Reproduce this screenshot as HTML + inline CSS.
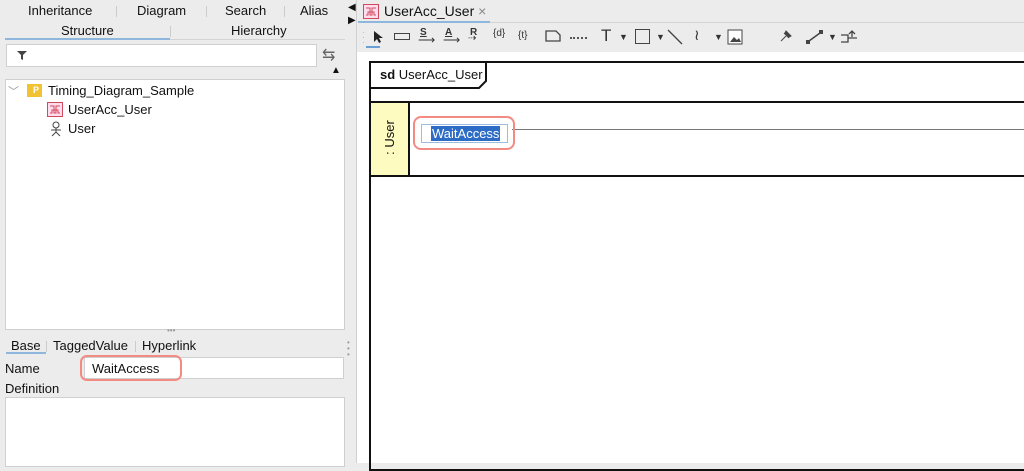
<!DOCTYPE html>
<html><head><style>
*{margin:0;padding:0;box-sizing:border-box}
body{width:1024px;height:463px;overflow:hidden;background:#ececec;font-family:"Liberation Sans",sans-serif;font-size:13px;color:#111;position:relative}
.a{position:absolute}
.t{position:absolute;white-space:nowrap}
.tb{position:absolute;top:28px;font-size:13px;color:#333;white-space:nowrap}
</style></head><body>
<!-- left panel -->
<div class="t" style="left:28px;top:3px">Inheritance</div>
<div class="t" style="left:137px;top:3px">Diagram</div>
<div class="t" style="left:225px;top:3px">Search</div>
<div class="t" style="left:300px;top:3px">Alias</div>
<div class="a" style="left:116px;top:6px;width:1px;height:11px;background:#ccc"></div>
<div class="a" style="left:206px;top:6px;width:1px;height:11px;background:#ccc"></div>
<div class="a" style="left:284px;top:6px;width:1px;height:11px;background:#ccc"></div>
<div class="t" style="left:348px;top:2px;font-size:10px">◀</div>
<div class="t" style="left:348px;top:15px;font-size:10px">▶</div>
<div class="t" style="left:61px;top:23px">Structure</div>
<div class="t" style="left:231px;top:23px">Hierarchy</div>
<div class="a" style="left:170px;top:26px;width:1px;height:11px;background:#ccc"></div>
<div class="a" style="left:5px;top:38px;width:165px;height:2px;background:#8fb6dc"></div>
<div class="a" style="left:170px;top:39px;width:175px;height:1px;background:#d4d4d4"></div>
<div class="a" style="left:6px;top:44px;width:311px;height:23px;background:#fff;border:1px solid #cfcfcf"></div>
<svg class="a" style="left:16px;top:49px" width="12" height="12"><path d="M1 2h10L7 6v5L5 10V6z" fill="#444"/></svg>
<div class="t" style="left:322px;top:45px;font-size:16px;color:#666">⇆</div>
<div class="t" style="left:331px;top:65px;font-size:10px">▲</div>
<div class="a" style="left:5px;top:79px;width:340px;height:251px;background:#fff;border:1px solid #cfcfcf"></div>
<div class="t" style="left:8px;top:83px;font-size:11px;color:#999">﹀</div>
<div class="a" style="left:27px;top:84px;width:15px;height:13px;background:#f1c232"></div>
<div class="t" style="left:33px;top:85px;font-size:9px;color:#fff;font-weight:bold">P</div>
<div class="t" style="left:48px;top:83px">Timing_Diagram_Sample</div>
<div class="a" style="left:47px;top:102px;width:16px;height:15px;border:1.5px solid #d04a5e;background:#fde"></div>
<svg class="a" style="left:47px;top:102px" width="16" height="15"><path d="M3 4h4v4h2V4h4M3 11h2V8h2v3h2V8h2v3h2" stroke="#d04a5e" fill="none"/></svg>
<div class="t" style="left:68px;top:102px">UserAcc_User</div>
<svg class="a" style="left:49px;top:121px" width="14" height="16"><circle cx="7" cy="4" r="3" stroke="#444" fill="none"/><path d="M7 7v4M2 9h10M7 11l-4 4M7 11l4 4" stroke="#444" fill="none"/></svg>
<div class="t" style="left:68px;top:121px">User</div>
<div class="t" style="left:167px;top:326px;font-size:8px;color:#999">•••</div>
<div class="t" style="left:11px;top:338px">Base</div>
<div class="t" style="left:53px;top:338px">TaggedValue</div>
<div class="t" style="left:142px;top:338px">Hyperlink</div>
<div class="a" style="left:46px;top:341px;width:1px;height:11px;background:#ccc"></div>
<div class="a" style="left:135px;top:341px;width:1px;height:11px;background:#ccc"></div>
<div class="a" style="left:6px;top:352px;width:40px;height:2px;background:#8fb6dc"></div>
<div class="t" style="left:347px;top:340px;font-size:8px;color:#999;line-height:6px">•<br>•<br>•</div>
<div class="t" style="left:5px;top:361px">Name</div>
<div class="a" style="left:84px;top:357px;width:260px;height:22px;background:#fff;border:1px solid #cfcfcf"></div>
<div class="a" style="left:80px;top:355px;width:102px;height:26px;border:2px solid #f28b82;border-radius:7px"></div>
<div class="t" style="left:92px;top:361px">WaitAccess</div>
<div class="t" style="left:5px;top:381px">Definition</div>
<div class="a" style="left:5px;top:397px;width:340px;height:70px;background:#fff;border:1px solid #cfcfcf"></div>
<div class="a" style="left:356px;top:0;width:1px;height:463px;background:#d0d0d0"></div>
<!-- right -->
<div class="a" style="left:363px;top:4px;width:16px;height:15px;border:1.5px solid #d04a5e;background:#fde"></div>
<svg class="a" style="left:363px;top:4px" width="16" height="15"><path d="M3 4h4v4h2V4h4M3 11h2V8h2v3h2V8h2v3h2" stroke="#d04a5e" fill="none"/></svg>
<div class="t" style="left:384px;top:3px;font-size:14px">UserAcc_User <span style="color:#888">×</span></div>
<div class="a" style="left:358px;top:21px;width:132px;height:2px;background:#8fb6dc"></div>
<div class="a" style="left:490px;top:22px;width:534px;height:1px;background:#d4d4d4"></div>
<!-- toolbar -->
<div class="t" style="left:362px;top:30px;font-size:8px;color:#aaa;line-height:5px">·<br>·<br>·</div>
<svg class="a" style="left:372px;top:30px" width="12" height="14"><path d="M2 1v11l3-3 2 4 2-1-2-4h4z" fill="#222"/></svg>
<div class="a" style="left:394px;top:33px;width:16px;height:7px;border:1.5px solid #444"></div>
<div class="tb" style="left:420px;font-size:10px;top:27px"><u><b>S</b></u><br></div><div class="tb" style="left:418px;top:33px;font-size:12px">⟶</div>
<div class="tb" style="left:445px;font-size:10px;top:27px"><u><b>A</b></u></div><div class="tb" style="left:443px;top:33px;font-size:12px">⟶</div>
<div class="tb" style="left:470px;font-size:10px;top:27px"><b>R</b></div><div class="tb" style="left:468px;top:33px;font-size:10px">⇢</div>
<div class="tb" style="left:493px;font-size:10px;top:28px">{d}</div>
<div class="tb" style="left:518px;font-size:10px;top:30px">{t}</div>
<svg class="a" style="left:545px;top:30px" width="16" height="12"><path d="M1 1h10l4 4v6H1z" stroke="#444" fill="none" stroke-width="1.3"/></svg>
<div class="a" style="left:570px;top:37px;width:17px;height:0;border-top:2px dotted #555"></div>
<div class="tb" style="left:601px;font-size:17px;top:26px">T</div><div class="tb" style="left:619px;font-size:9px;top:32px">▼</div>
<div class="a" style="left:635px;top:29px;width:15px;height:15px;border:1.5px solid #444"></div><div class="tb" style="left:656px;font-size:9px;top:32px">▼</div>
<svg class="a" style="left:667px;top:29px" width="16" height="16"><path d="M1 1l14 14" stroke="#444" stroke-width="1.3"/></svg>
<div class="tb" style="left:694px;font-size:15px;top:26px">≀</div><div class="tb" style="left:714px;font-size:9px;top:32px">▼</div>
<svg class="a" style="left:727px;top:29px" width="16" height="16"><rect x="1" y="1" width="14" height="14" fill="#fff" stroke="#444"/><path d="M3 13l4-5 3 3 2-2 2 4z" fill="#444"/></svg>
<svg class="a" style="left:779px;top:29px" width="14" height="14"><path d="M2 12l5-5M5 4l5 5M7 2l5 5-2 1-4-4z" stroke="#444" fill="#444"/></svg>
<svg class="a" style="left:805px;top:29px" width="20" height="16"><rect x="1" y="11" width="4" height="4" fill="#444"/><rect x="14" y="1" width="4" height="4" fill="#444"/><path d="M4 12L15 4" stroke="#444" stroke-width="1.5"/></svg>
<div class="tb" style="left:828px;font-size:9px;top:32px">▼</div>
<svg class="a" style="left:840px;top:30px" width="18" height="14"><path d="M1 5h7v7H1M8 8h9M12 1v6M9 4l3-3 3 3" stroke="#444" fill="none" stroke-width="1.3"/></svg>
<div class="a" style="left:366px;top:46px;width:14px;height:2px;background:#6a9fd4"></div>
<div class="a" style="left:357px;top:52px;width:667px;height:411px;background:#fff"></div>
<div class="a" style="left:369px;top:61px;width:660px;height:410px;border:2px solid #111"></div>
<svg class="a" style="left:369px;top:61px" width="125" height="30"><path d="M1 27H110l7-7V1" stroke="#111" stroke-width="2" fill="none"/></svg>
<div class="t" style="left:380px;top:67px"><b>sd</b> UserAcc_User</div>
<div class="a" style="left:369px;top:101px;width:660px;height:2px;background:#111"></div>
<div class="a" style="left:371px;top:103px;width:39px;height:72px;background:#fdfbc0;border-right:2px solid #111"></div>
<div class="t" style="left:372px;top:130px;transform:rotate(-90deg);font-size:13px">: User</div>
<div class="a" style="left:369px;top:175px;width:660px;height:2px;background:#111"></div>
<div class="a" style="left:512px;top:129px;width:512px;height:1px;background:#777"></div>
<div class="a" style="left:421px;top:124px;width:87px;height:19px;background:#fff;border:1px solid #9cbde0"></div>
<div class="t" style="left:431px;top:126px;background:#2c6cc4;color:#fff;padding:0 1px">WaitAccess</div>
<div class="a" style="left:413px;top:116px;width:102px;height:34px;border:2px solid #f28b82;border-radius:8px"></div>
</body></html>
